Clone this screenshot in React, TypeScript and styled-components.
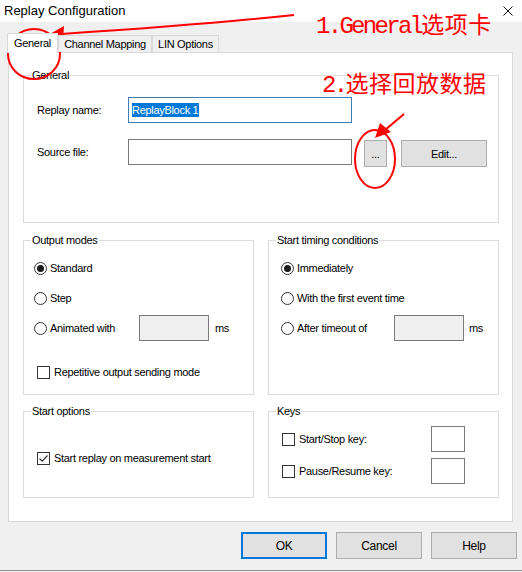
import styled, { createGlobalStyle } from "styled-components";

const GlobalStyle = createGlobalStyle`
  html, body {
    margin: 0;
    padding: 0;
  }
  body {
    background: #f0f0f0;
    font-family: "Liberation Sans", Arial, sans-serif;
    font-size: 11px;
    color: #000;
  }
`;

const Window = styled.div`
  position: relative;
  width: 522px;
  height: 572px;
  display: flex;
  flex-direction: column;
  background: #f0f0f0;
  overflow: hidden;
  letter-spacing: -0.3px;
`;

const TitleBar = styled.div`
  flex: none;
  height: 22px;
  box-sizing: border-box;
  background: #fff;
  display: flex;
  align-items: center;
  justify-content: space-between;
  padding: 0 9px 1px 4px;
  font-size: 13px;
  letter-spacing: 0;
`;

const TabStrip = styled.div`
  flex: none;
  height: 30px;
  display: flex;
  align-items: flex-end;
  padding-left: 7px;
`;

const Tab = styled.div<{ $w: number; $active?: boolean }>`
  position: relative;
  z-index: 2;
  box-sizing: border-box;
  width: ${(p) => p.$w}px;
  height: ${(p) => (p.$active ? 20 : 17)}px;
  margin-bottom: ${(p) => (p.$active ? -1 : 0)}px;
  display: flex;
  align-items: ${(p) => (p.$active ? "flex-start" : "center")};
  justify-content: center;
  padding-top: ${(p) => (p.$active ? 3 : 0)}px;
  background: ${(p) => (p.$active ? "#fff" : "#f0f0f0")};
  border: 1px solid #d9d9d9;
  border-bottom: none;
`;

const Panel = styled.div`
  flex: none;
  box-sizing: border-box;
  height: 470px;
  margin: 0 9px 0 8px;
  padding: 22px 13px 0 14px;
  background: #fff;
  border: 1px solid #d9d9d9;
  display: flex;
  flex-direction: column;
`;

const Group = styled.div<{ $h: number }>`
  box-sizing: border-box;
  height: ${(p) => p.$h}px;
  border: 1px solid #dcdcdc;
  display: flex;
  flex-direction: column;
`;

const Legend = styled.div`
  align-self: flex-start;
  margin: -7px 0 0 7px;
  padding: 0 1px;
  line-height: 13px;
  background: #fff;
`;

const FieldRow = styled.div<{ $top: number }>`
  display: flex;
  align-items: flex-start;
  height: 26px;
  margin-top: ${(p) => p.$top}px;
  padding-left: 13px;
`;

const FieldLabel = styled.div`
  width: 91px;
  line-height: 26px;
`;

const TextInput = styled.div<{ $focused?: boolean }>`
  box-sizing: border-box;
  width: 224px;
  height: 26px;
  padding: 0 3px;
  display: flex;
  align-items: center;
  background: #fff;
  border: 1px solid ${(p) => (p.$focused ? "#3f7fb5" : "#7a7a7a")};
`;

const Selected = styled.span`
  background: #0078d7;
  color: #fff;
  line-height: 14px;
  padding-right: 1px;
`;

const Button = styled.button<{ $w: number; $gap?: number; $default?: boolean }>`
  box-sizing: border-box;
  width: ${(p) => p.$w}px;
  height: 27px;
  margin: 0 0 0 ${(p) => p.$gap ?? 0}px;
  padding: 0;
  background: #e1e1e1;
  border: ${(p) => (p.$default ? "2px solid #0078d7" : "1px solid #adadad")};
  font: inherit;
  font-size: ${(p) => (p.$default !== undefined ? 12 : 11)}px;
  letter-spacing: inherit;
  color: #000;
`;

const Columns = styled.div`
  display: grid;
  grid-template-columns: 231px 231px;
  column-gap: 14px;
  row-gap: 16px;
  margin-top: 17px;
`;

const OptionRow = styled.div<{ $left: number; $top: number }>`
  display: flex;
  align-items: center;
  height: 26px;
  padding-left: ${(p) => p.$left}px;
  margin-top: ${(p) => p.$top}px;
`;

const Radio = styled.span<{ $checked?: boolean }>`
  flex: none;
  box-sizing: border-box;
  width: 13px;
  height: 13px;
  border-radius: 50%;
  border: 1px solid #333;
  background: #fff;
  display: flex;
  align-items: center;
  justify-content: center;

  &::after {
    content: "";
    width: 7px;
    height: 7px;
    border-radius: 50%;
    background: ${(p) => (p.$checked ? "#1a1a1a" : "transparent")};
  }
`;

const Check = styled.span`
  flex: none;
  box-sizing: border-box;
  width: 13px;
  height: 13px;
  border: 1px solid #333;
  background: #fff;

  svg {
    display: block;
  }
`;

const OptionText = styled.span<{ $gap: number; $w?: number }>`
  margin-left: ${(p) => p.$gap}px;
  width: ${(p) => (p.$w ? `${p.$w}px` : "auto")};
  flex: none;
`;

const NumberInput = styled.div<{ $w: number; $gray?: boolean }>`
  flex: none;
  box-sizing: border-box;
  width: ${(p) => p.$w}px;
  height: 26px;
  background: ${(p) => (p.$gray ? "#f0f0f0" : "#fff")};
  border: 1px solid #7a7a7a;
`;

const Unit = styled.span<{ $gap: number }>`
  margin-left: ${(p) => p.$gap}px;
`;

const Footer = styled.div`
  flex: none;
  display: flex;
  justify-content: flex-end;
  gap: 9px;
  padding: 10px 5px 0 0;
`;

const BottomEdge = styled.div`
  margin-top: auto;
  height: 1px;
  border-top: 1px solid #8c8c8c;
  background: #f0f0f0;
`;

const Overlay = styled.svg`
  position: absolute;
  left: 0;
  top: 0;
  pointer-events: none;
`;

const Checkbox = ({ checked }: { checked?: boolean }) => (
  <Check>
    {checked && (
      <svg width="11" height="11" viewBox="0 0 11 11">
        <polyline points="1.5,5.5 4.2,8.2 9.5,2.5" fill="none" stroke="#333" strokeWidth="1.2" />
      </svg>
    )}
  </Check>
);

const App = () => {
  return (
    <>
      <GlobalStyle />
      <Window>
        <TitleBar>
          <span>Replay Configuration</span>
          <svg width="10" height="10" viewBox="0 0 10 10">
            <path d="M0.5 0.5 L9.5 9.5 M9.5 0.5 L0.5 9.5" stroke="#111" strokeWidth="1" />
          </svg>
        </TitleBar>

        <TabStrip>
          <Tab $w={51} $active>
            General
          </Tab>
          <Tab $w={94}>Channel Mapping</Tab>
          <Tab $w={67}>LIN Options</Tab>
        </TabStrip>

        <Panel>
          <Group $h={148}>
            <Legend>General</Legend>
            <FieldRow $top={15}>
              <FieldLabel>Replay name:</FieldLabel>
              <TextInput $focused>
                <Selected>ReplayBlock 1</Selected>
              </TextInput>
            </FieldRow>
            <FieldRow $top={16}>
              <FieldLabel>Source file:</FieldLabel>
              <TextInput />
              <Button $w={23} $gap={12} style={{ marginTop: 1 }}>
                ...
              </Button>
              <Button $w={86} $gap={14} style={{ marginTop: 1 }}>
                Edit...
              </Button>
            </FieldRow>
          </Group>

          <Columns>
            <Group $h={155}>
              <Legend>Output modes</Legend>
              <OptionRow $left={10} $top={8}>
                <Radio $checked />
                <OptionText $gap={3}>Standard</OptionText>
              </OptionRow>
              <OptionRow $left={10} $top={4}>
                <Radio />
                <OptionText $gap={3}>Step</OptionText>
              </OptionRow>
              <OptionRow $left={10} $top={4}>
                <Radio />
                <OptionText $gap={3} $w={89}>
                  Animated with
                </OptionText>
                <NumberInput $w={70} $gray />
                <Unit $gap={6}>ms</Unit>
              </OptionRow>
              <OptionRow $left={13} $top={18}>
                <Checkbox />
                <OptionText $gap={4}>Repetitive output sending mode</OptionText>
              </OptionRow>
            </Group>

            <Group $h={155}>
              <Legend>Start timing conditions</Legend>
              <OptionRow $left={12} $top={8}>
                <Radio $checked />
                <OptionText $gap={3}>Immediately</OptionText>
              </OptionRow>
              <OptionRow $left={12} $top={4}>
                <Radio />
                <OptionText $gap={3}>With the first event time</OptionText>
              </OptionRow>
              <OptionRow $left={12} $top={4}>
                <Radio />
                <OptionText $gap={3} $w={97}>
                  After timeout of
                </OptionText>
                <NumberInput $w={70} $gray />
                <Unit $gap={5}>ms</Unit>
              </OptionRow>
            </Group>

            <Group $h={87}>
              <Legend>Start options</Legend>
              <OptionRow $left={13} $top={27}>
                <Checkbox checked />
                <OptionText $gap={4}>Start replay on measurement start</OptionText>
              </OptionRow>
            </Group>

            <Group $h={87}>
              <Legend>Keys</Legend>
              <OptionRow $left={13} $top={8}>
                <Checkbox />
                <OptionText $gap={4} $w={132}>
                  Start/Stop key:
                </OptionText>
                <NumberInput $w={34} />
              </OptionRow>
              <OptionRow $left={13} $top={6}>
                <Checkbox />
                <OptionText $gap={4} $w={132}>
                  Pause/Resume key:
                </OptionText>
                <NumberInput $w={34} />
              </OptionRow>
            </Group>
          </Columns>
        </Panel>

        <Footer>
          <Button $w={86} $default>
            OK
          </Button>
          <Button $w={86} $default={false}>
            Cancel
          </Button>
          <Button $w={86} $default={false}>
            Help
          </Button>
        </Footer>

        <BottomEdge />

        <Overlay width="522" height="572" viewBox="0 0 522 572">
          <g fill="none" stroke="#f00" strokeWidth="2">
            <ellipse cx="34" cy="54" rx="26" ry="25" />
            <path d="M294 15 Q 200 25 61 34" />
            <path d="M404 114 L 385 130" />
            <ellipse cx="375" cy="159" rx="20" ry="29" />
          </g>
          <g fill="#f00">
            <polygon points="48,35 64,26 63,42" />
            <polygon points="375,138 380,123 391,132" />
          </g>
          <text x="316" y="33" fill="#f00" fontSize="24">
            <tspan fontFamily="'Liberation Mono', monospace" letterSpacing="-2.7">
              1.General
            </tspan>
            <tspan fontFamily="'Noto Sans CJK SC', sans-serif" fontSize="23" letterSpacing="0.5">
              选项卡
            </tspan>
          </text>
          <text x="322" y="92" fill="#f00" fontSize="24">
            <tspan fontFamily="'Liberation Mono', monospace" letterSpacing="-2.7">
              2.
            </tspan>
            <tspan fontFamily="'Noto Sans CJK SC', sans-serif" fontSize="23" letterSpacing="0.5">
              选择回放数据
            </tspan>
          </text>
        </Overlay>
      </Window>
    </>
  );
};

export default App;
